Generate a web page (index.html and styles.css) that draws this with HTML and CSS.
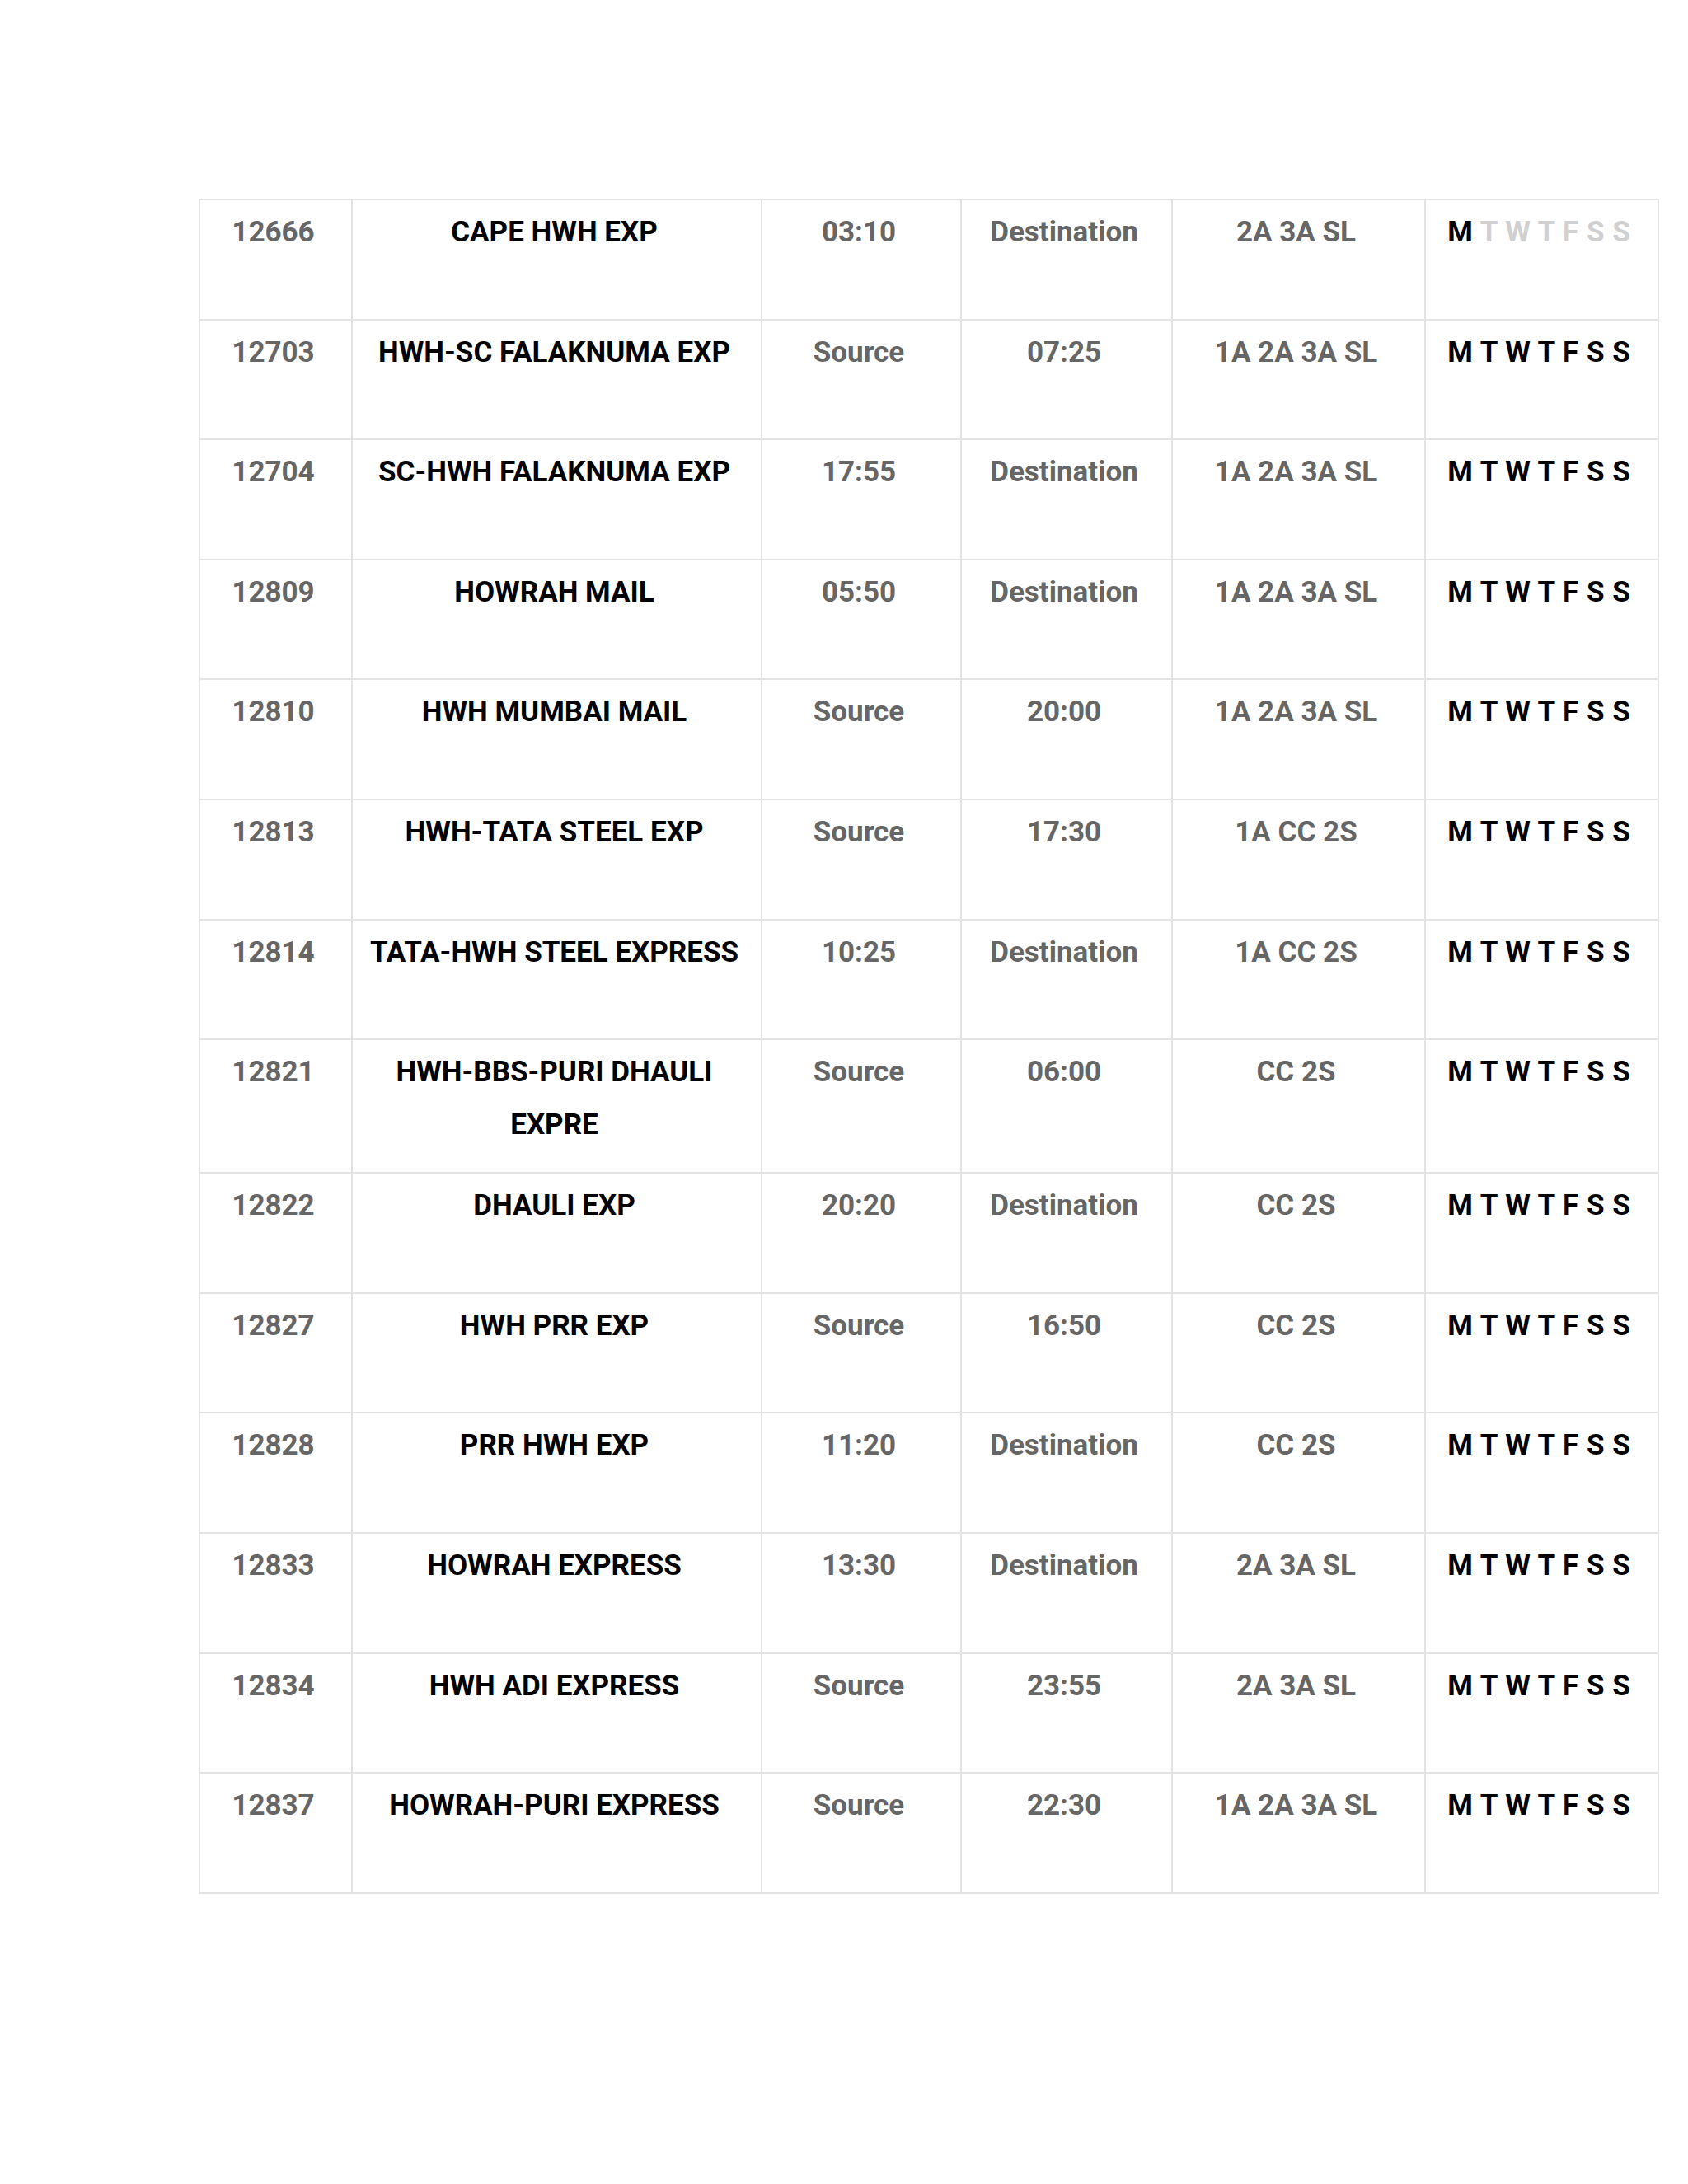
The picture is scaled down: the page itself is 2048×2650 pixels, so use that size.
FILE: index.html
```html
<!DOCTYPE html>
<html lang="en">
<head>
<meta charset="utf-8">
<title>Trains</title>
<link rel="stylesheet" href="styles.css">
</head>
<body>
<div class="page">
<table class="trains">
<colgroup>
<col class="c-no"><col class="c-name"><col class="c-a"><col class="c-b"><col class="c-cls"><col class="c-days">
</colgroup>
<tbody>
<tr><td class="num">12666</td><td class="name">CAPE HWH EXP</td><td class="g">03:10</td><td class="g">Destination</td><td class="g">2A 3A SL</td><td class="days"><b>M</b> <i>T</i> <i>W</i> <i>T</i> <i>F</i> <i>S</i> <i>S</i></td></tr>
<tr><td class="num">12703</td><td class="name">HWH-SC FALAKNUMA EXP</td><td class="g">Source</td><td class="g">07:25</td><td class="g">1A 2A 3A SL</td><td class="days">M T W T F S S</td></tr>
<tr><td class="num">12704</td><td class="name">SC-HWH FALAKNUMA EXP</td><td class="g">17:55</td><td class="g">Destination</td><td class="g">1A 2A 3A SL</td><td class="days">M T W T F S S</td></tr>
<tr><td class="num">12809</td><td class="name">HOWRAH MAIL</td><td class="g">05:50</td><td class="g">Destination</td><td class="g">1A 2A 3A SL</td><td class="days">M T W T F S S</td></tr>
<tr><td class="num">12810</td><td class="name">HWH MUMBAI MAIL</td><td class="g">Source</td><td class="g">20:00</td><td class="g">1A 2A 3A SL</td><td class="days">M T W T F S S</td></tr>
<tr><td class="num">12813</td><td class="name">HWH-TATA STEEL EXP</td><td class="g">Source</td><td class="g">17:30</td><td class="g">1A CC 2S</td><td class="days">M T W T F S S</td></tr>
<tr><td class="num">12814</td><td class="name">TATA-HWH STEEL EXPRESS</td><td class="g">10:25</td><td class="g">Destination</td><td class="g">1A CC 2S</td><td class="days">M T W T F S S</td></tr>
<tr class="tall"><td class="num">12821</td><td class="name">HWH-BBS-PURI DHAULI EXPRE</td><td class="g">Source</td><td class="g">06:00</td><td class="g">CC 2S</td><td class="days">M T W T F S S</td></tr>
<tr><td class="num">12822</td><td class="name">DHAULI EXP</td><td class="g">20:20</td><td class="g">Destination</td><td class="g">CC 2S</td><td class="days">M T W T F S S</td></tr>
<tr><td class="num">12827</td><td class="name">HWH PRR EXP</td><td class="g">Source</td><td class="g">16:50</td><td class="g">CC 2S</td><td class="days">M T W T F S S</td></tr>
<tr><td class="num">12828</td><td class="name">PRR HWH EXP</td><td class="g">11:20</td><td class="g">Destination</td><td class="g">CC 2S</td><td class="days">M T W T F S S</td></tr>
<tr><td class="num">12833</td><td class="name">HOWRAH EXPRESS</td><td class="g">13:30</td><td class="g">Destination</td><td class="g">2A 3A SL</td><td class="days">M T W T F S S</td></tr>
<tr><td class="num">12834</td><td class="name">HWH ADI EXPRESS</td><td class="g">Source</td><td class="g">23:55</td><td class="g">2A 3A SL</td><td class="days">M T W T F S S</td></tr>
<tr><td class="num">12837</td><td class="name">HOWRAH-PURI EXPRESS</td><td class="g">Source</td><td class="g">22:30</td><td class="g">1A 2A 3A SL</td><td class="days">M T W T F S S</td></tr>
</tbody>
</table>
</div>
</body>
</html>
```
FILE: styles.css
```css
html, body {
  margin: 0;
  padding: 0;
  background: #ffffff;
}
body {
  font-family: Roboto, "Liberation Sans", Arial, sans-serif;
}
.page {
  padding: 241px 0 0 241px;
}
.trains {
  border-collapse: collapse;
  table-layout: fixed;
  width: 1770px;
}
.c-no { width: 185px; }
.c-name { width: 497px; }
.c-a { width: 242px; }
.c-b { width: 256px; }
.c-cls { width: 307px; }
.c-days { width: 283px; }
.trains td {
  border: 2px solid #e3e3e3;
  height: 145.6px;
  box-sizing: border-box;
  padding: 7px 15px 24px 9px;
  vertical-align: top;
  text-align: center;
  font-size: 35px;
  line-height: 64px;
  font-weight: 700;
  color: #666666;
}
.trains tr.tall td {
  height: 162px;
}
.trains td.name {
  color: #000000;
}
.trains td.days {
  color: #000000;
  white-space: nowrap;
  padding-left: 0;
  padding-right: 7px;
  word-spacing: 1px;
}
.days b {
  font-weight: 700;
  color: #000000;
}
.days i {
  font-style: normal;
  color: #d0d0d0;
}
```
